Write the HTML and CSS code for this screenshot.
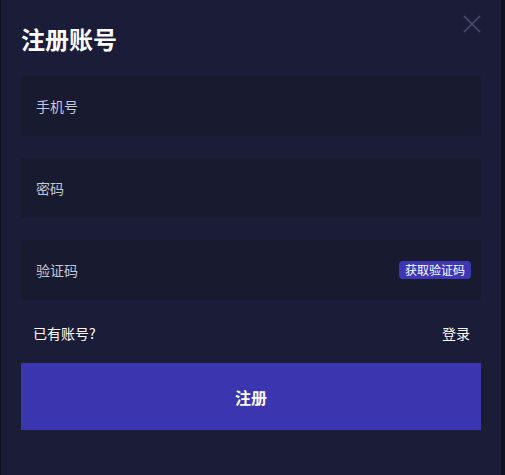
FILE: index.html
```html
<!DOCTYPE html>
<html lang="zh">
<head>
<meta charset="utf-8">
<link rel="stylesheet" href="styles.css">
</head>
<body>
<div class="panel">
  <button class="close" aria-label="关闭">
    <svg width="18" height="18" viewBox="0 0 18 18"><path d="M1 1L17 17M17 1L1 17" stroke="#4b4c6e" stroke-width="1.6" fill="none"/></svg>
  </button>
  <h1 class="title">注册账号</h1>
  <div class="fields">
    <div class="field"><span class="label">手机号</span></div>
    <div class="field"><span class="label">密码</span></div>
    <div class="field"><span class="label">验证码</span><span class="badge">获取验证码</span></div>
  </div>
  <div class="row"><span>已有账号?</span><span>登录</span></div>
  <div class="submit">注册</div>
</div>
</body>
</html>
```
FILE: styles.css
```css
html, body {
  margin: 0;
  height: 100%;
  background: #111120;
}
body {
  font-family: "Noto Sans CJK SC", "Noto Sans", sans-serif;
  overflow: hidden;
}
.panel {
  position: relative;
  margin-left: 1px;
  width: 500px;
  height: 475px;
  box-sizing: border-box;
  background: #1b1c38;
  padding: 22px 20px 0 20px;
}
.close {
  position: absolute;
  top: 15px;
  left: 462px;
  padding: 0;
  border: 0;
  background: none;
  width: 18px;
  height: 18px;
}
.close svg { display: block; }
.title {
  margin: 0;
  font-size: 24px;
  line-height: 34px;
  font-weight: 700;
  color: #ffffff;
}
.fields {
  margin-top: 20px;
  display: flex;
  flex-direction: column;
  gap: 22px;
}
.field {
  height: 60px;
  border-radius: 4px;
  background: #181a2f;
  display: flex;
  align-items: center;
  justify-content: space-between;
  padding: 0 10px 0 15px;
}
.label {
  font-size: 14px;
  line-height: 18px;
  margin-top: -1px;
  color: #c4c7d8;
}
.badge {
  background: #3d37b6;
  color: #ffffff;
  font-size: 12px;
  line-height: 18px;
  padding: 0 6px;
  border-radius: 4px;
}
.row {
  display: flex;
  justify-content: space-between;
  padding: 0 11px 0 12px;
  margin-top: 22px;
  font-size: 14px;
  line-height: 22px;
  color: #ffffff;
}
.submit {
  margin-top: 19px;
  height: 67px;
  background: #3b35b0;
  color: #ffffff;
  font-size: 16px;
  font-weight: 700;
  display: flex;
  align-items: center;
  justify-content: center;
}
```
